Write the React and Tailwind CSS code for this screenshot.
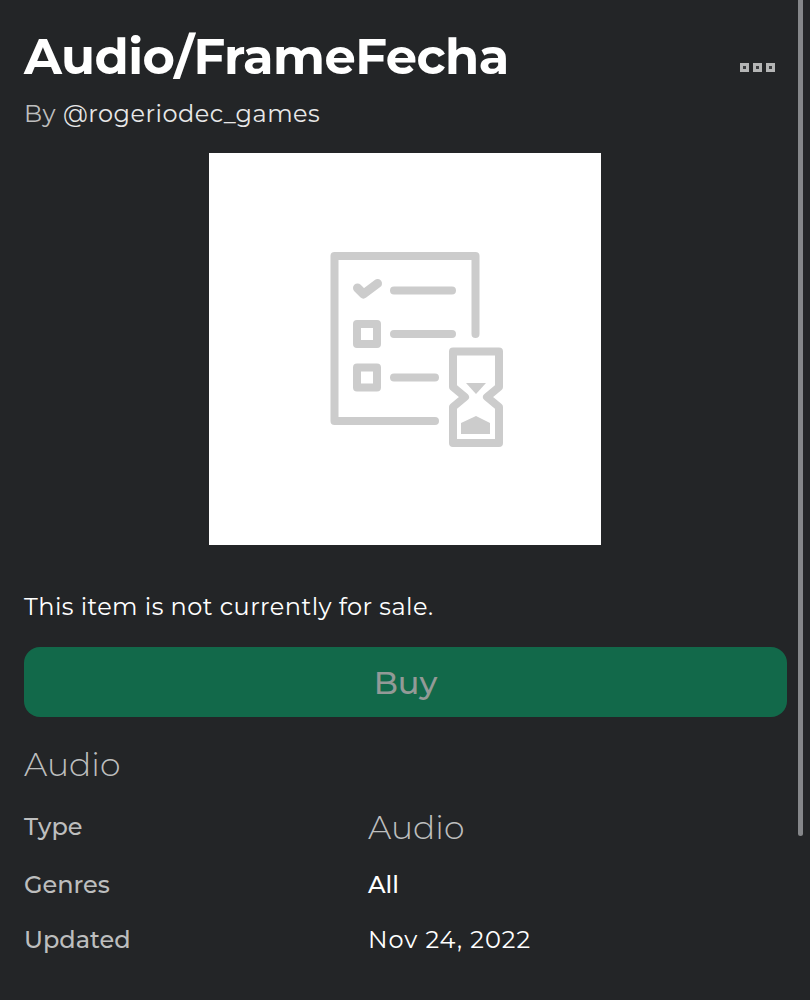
export default function App() {
  return (
    <div className="relative h-[1000px] w-[810px] overflow-hidden bg-[#232527] font-['Montserrat','Inter','Open_Sans',sans-serif] text-white">
      <div className="absolute right-[7px] top-0 h-[836px] w-[5px] rounded-b-full bg-[#85878a]" />
      <div className="w-[787px] pl-6 pt-7">
        <div className="flex items-start justify-between">
          <h1 className="h-14 text-[49.5px] leading-[56px] font-bold tracking-[-0.5px]">Audio/FrameFecha</h1>
          <div className="mt-[35px] mr-[12px] flex gap-[4px]">
            <span className="h-[9px] w-[9px] border-[3px] border-[#b4b5b5] bg-[#3a3c3e]" />
            <span className="h-[9px] w-[9px] border-[3px] border-[#b4b5b5] bg-[#3a3c3e]" />
            <span className="h-[9px] w-[9px] border-[3px] border-[#b4b5b5] bg-[#3a3c3e]" />
          </div>
        </div>
        <p className="mt-[14px] h-8 text-[24px] leading-8 tracking-[0.5px] text-[#bdbebe]">
          By <span className="text-[#e8e8e8]">@rogeriodec_games</span>
        </p>
        <div className="mt-[23px] ml-[185px] h-[392px] w-[392px] bg-white">
          <svg width="392" height="392" viewBox="209 153 392 392" fill="none" stroke="#cccccc" strokeWidth="8" strokeLinecap="round" strokeLinejoin="round">
            <path d="M475.500 334V256H334.500V421H435" />
            <path d="M357.500 288L363.500 294L377.500 283.500" strokeWidth="9" />
            <path d="M394 290.500H452M394 334H452M394 377.500H435" />
            <rect x="357" y="324" width="20" height="20" />
            <rect x="357" y="367.500" width="20" height="20" />
            <path d="M453 351.500H499V387L487 397L499 407V443H453V407L465 397L453 387Z" />
            <path d="M466 383H486L476 394Z" fill="#cccccc" stroke="none" />
            <path d="M461 434V423L476 416L490 423V434Z" fill="#cccccc" stroke="none" />
          </svg>
        </div>
        <p className="mt-[46px] h-8 text-[24px] leading-8 tracking-[0.45px]">This item is not currently for sale.</p>
        <button className="mt-6 flex h-[70px] w-[763px] items-center justify-center rounded-2xl bg-[#12694a] pt-[2px] text-[32px] font-medium text-[#939a97]">Buy</button>
        <h2 className="mt-[27px] h-10 text-[33px] leading-10 font-light text-[#bdbebe]">Audio</h2>
        <div className="mt-[23px] grid grid-cols-[344px_1fr] items-center text-[24px] leading-8">
          <div className="flex h-10 items-center font-medium text-[#bdbebe]">Type</div>
          <div className="h-10 text-[33px] leading-10 font-light text-[#bdbebe]">Audio</div>
          <div className="mt-[22px] h-8 font-medium text-[#bdbebe]">Genres</div>
          <div className="mt-[22px] h-8 font-medium">All</div>
          <div className="mt-[23px] h-8 font-medium text-[#bdbebe]">Updated</div>
          <div className="mt-[23px] h-8 tracking-[1px]">Nov 24, 2022</div>
        </div>
      </div>
    </div>
  );
}
